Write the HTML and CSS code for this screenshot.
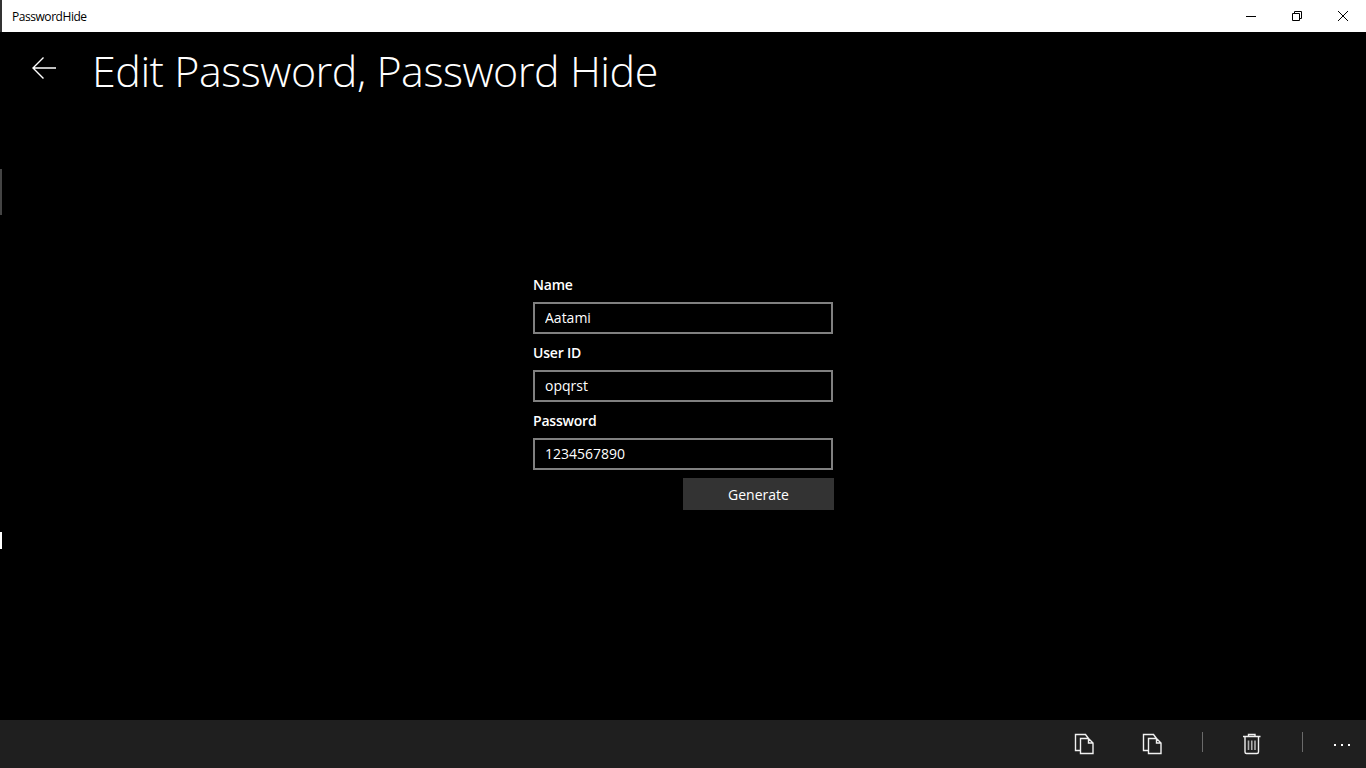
FILE: index.html
```html
<!DOCTYPE html>
<html lang="en">
<head>
<meta charset="utf-8">
<title>PasswordHide</title>
<link rel="stylesheet" href="styles.css">
</head>
<body>
<div class="window">
  <div class="titlebar">
    <span class="app-name">PasswordHide</span>
    <div class="win-controls">
      <button class="win-btn" aria-label="Minimize"><svg width="12" height="12" viewBox="0 0 12 12"><path d="M1 6.5H11" class="win-stroke"/></svg></button>
      <button class="win-btn" aria-label="Restore"><svg width="12" height="12" viewBox="0 0 12 12"><path d="M1.5 3.5H8.5V10.5H1.5Z M3.5 3.5V1.5H10.5V8.5H8.5" class="win-stroke"/></svg></button>
      <button class="win-btn" aria-label="Close"><svg width="12" height="12" viewBox="0 0 12 12"><path d="M1 1L11 11M11 1L1 11" class="win-stroke"/></svg></button>
    </div>
  </div>
  <main class="page">
    <span class="marker marker-gray"></span>
    <span class="marker marker-white"></span>
    <header class="page-header">
      <button class="back" aria-label="Back"><svg width="26" height="24" viewBox="0 0 26 24"><path d="M25 12H2M12.5 1.5L2 12L12.5 22.5" class="back-stroke"/></svg></button>
      <h1 class="page-title">Edit Password, Password Hide</h1>
    </header>
    <form class="form">
      <label class="field"><span class="field-label">Name</span><input class="field-input" value="Aatami"></label>
      <label class="field"><span class="field-label">User ID</span><input class="field-input" value="opqrst"></label>
      <label class="field"><span class="field-label">Password</span><input class="field-input" value="1234567890"></label>
      <div class="form-actions"><button type="button" class="generate">Generate</button></div>
    </form>
  </main>
  <footer class="commandbar">
    <button class="cmd" aria-label="Copy user ID"><svg class="cmd-icon" width="20" height="22" viewBox="0 0 20 22"><path d="M6 17.5H1.5V1.5H11.5L14.5 5.5M6.5 5.5H14.5L19 10V20.5H6.5ZM14.5 5.5V10H19" class="cmd-stroke"/></svg></button>
    <button class="cmd" aria-label="Copy password"><svg class="cmd-icon" width="20" height="22" viewBox="0 0 20 22"><path d="M6 17.5H1.5V1.5H11.5L14.5 5.5M6.5 5.5H14.5L19 10V20.5H6.5ZM14.5 5.5V10H19" class="cmd-stroke"/></svg></button>
    <span class="cmd-sep"></span>
    <button class="cmd" aria-label="Delete"><svg class="cmd-icon" width="20" height="22" viewBox="0 0 20 22"><path d="M1 3.5H18.5M6.5 3.5V1.5H13V3.5M3 3.5V19Q3 20.5 4.5 20.5H15Q16.5 20.5 16.5 19V3.5" class="cmd-stroke"/><path d="M6.5 7.5V17M9.75 7.5V17M13 7.5V17" class="cmd-bars"/></svg></button>
    <span class="cmd-sep"></span>
    <button class="more" aria-label="More"><span class="dot"></span><span class="dot"></span><span class="dot"></span></button>
  </footer>
</div>
</body>
</html>
```
FILE: styles.css
```css
* { box-sizing: border-box; }
html, body { margin: 0; height: 100%; background: #000; }
body { font-family: "Open Sans", "Noto Sans", "Liberation Sans", sans-serif; color: #fff; overflow: hidden; }
button { font: inherit; color: inherit; background: none; border: 0; padding: 0; }
.window { display: flex; flex-direction: column; width: 1366px; height: 768px; }

.titlebar { flex: none; display: flex; align-items: center; justify-content: space-between; height: 32px; background: #fff; color: #000; border-left: 2px solid #333; }
.app-name { padding-left: 10px; font-size: 12px; letter-spacing: -0.45px; }
.win-controls { display: flex; }
.win-btn { display: flex; align-items: center; justify-content: center; width: 46px; height: 32px; }
.win-stroke { fill: none; stroke: #000; stroke-width: 1; }

.page { position: relative; flex: 1; min-height: 0; }
.marker { position: absolute; left: 0; width: 2px; }
.marker-gray { top: 137px; height: 46px; background: #444; }
.marker-white { top: 500px; height: 17px; background: #fff; }

.page-header { display: flex; align-items: center; height: 78px; padding-left: 31px; }
.back { display: flex; width: 61px; height: 24px; margin-top: -6px; }
.back-stroke { fill: none; stroke: #fff; stroke-width: 1.4; }
.page-title { margin: 0; font-size: 43px; font-weight: 300; letter-spacing: -0.48px; line-height: 78px; white-space: nowrap; }

.form { width: 300px; margin: 156px auto 0; display: flex; flex-direction: column; }
.field { display: flex; flex-direction: column; }
.field-label { height: 36px; padding-top: 9px; font-size: 14px; font-weight: 600; letter-spacing: -0.2px; line-height: 20px; }
.field-input { width: 300px; height: 32px; padding: 0 10px 2px; border: 2px solid #808080; border-radius: 0; outline: 0; background: #000; color: #fff; font: inherit; font-size: 14px; }
.form-actions { display: flex; justify-content: flex-end; margin: 8px -1px 0 0; }
.generate { width: 151px; height: 32px; background: #333; font-size: 14px; }

.commandbar { flex: none; display: flex; justify-content: flex-end; align-items: stretch; height: 48px; background: #1f1f1f; }
.cmd { display: flex; justify-content: center; width: 68px; padding-top: 13px; }
.cmd-icon { display: block; }
.cmd-stroke { fill: none; stroke: #f0f0f0; stroke-width: 1.4; }
.cmd-bars { fill: none; stroke: #b0b0b0; stroke-width: 1.6; }
.cmd-sep { position: relative; width: 32px; }
.cmd-sep::before { content: ""; position: absolute; left: 16px; top: 12px; width: 1px; height: 20px; background: #6a6a6a; }
.more { display: flex; justify-content: center; gap: 5px; width: 48px; padding-top: 24px; }
.dot { width: 2px; height: 2px; background: #fff; }
```
